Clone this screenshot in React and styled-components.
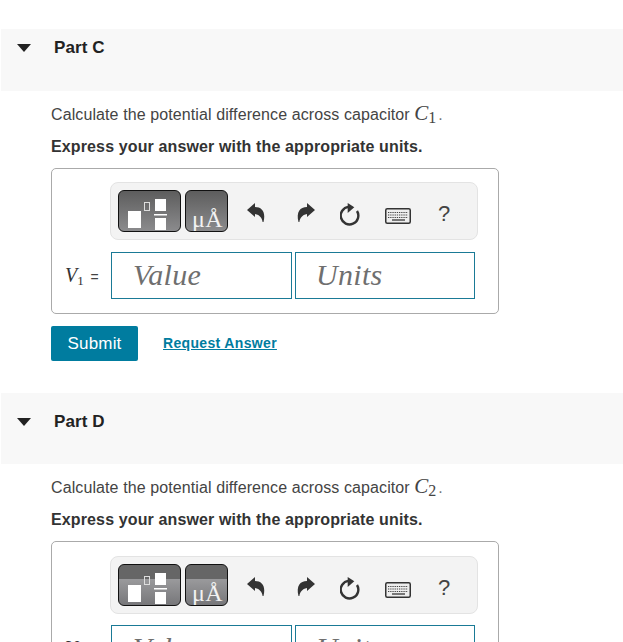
import React from "react";
import styled, { createGlobalStyle } from "styled-components";

const Global = createGlobalStyle`
  html, body { margin: 0; padding: 0; background: #fff; overflow: hidden; height: 642px; }
  body { font-family: "Liberation Sans", Arial, sans-serif; color: #333; }
`;
const Page = styled.div`width: 623px; height: 642px; overflow: hidden; padding-top: 29px; box-sizing: border-box;`;
const Section = styled.section`margin-bottom: ${p => p.$gap || 0}px;`;
const Header = styled.header`
  margin-left: 1px; height: ${p => p.$h}px; background: #f8f8f8; display: flex; align-items: flex-start;
  padding: ${p => p.$pt}px 0 0 16px; box-sizing: border-box;
`;
const Caret = styled.svg`width: 14px; height: 8px; margin-top: 6px; flex: none;`;
const PartTitle = styled.h3`margin: 0 0 0 23px; font-size: 17px; line-height: 19px; font-weight: 700; color: #222; letter-spacing: 0.1px;`;
const Body = styled.div`padding: 10px 0 0 51px;`;
const Prompt = styled.p`margin: 0; height: 24px; font-size: 16px; line-height: 24px; color: #444; letter-spacing: 0.1px; white-space: nowrap;`;
const MathVar = styled.span`
  font-family: "Liberation Serif", serif; font-style: italic; font-size: 21px; color: #444; letter-spacing: 0;
  sub { font-style: normal; font-size: 16px; line-height: 0; vertical-align: -3px; }
`;
const Period = styled.span`margin-left: 2px; color: #777;`;
const Instruction = styled.p`margin: 10px 0 0; font-size: 16px; line-height: 24px; font-weight: 700; color: #333; letter-spacing: 0.13px;`;
const AnswerBox = styled.div`
  margin-top: 9px; width: 448px; height: 146px; box-sizing: border-box; border: 1px solid #aaa; border-radius: 5px;
  padding: ${p => p.$top}px 20px 0 58px;
`;
const Toolbar = styled.div`
  width: 368px; height: 58px; box-sizing: border-box; background: #f3f3f3; border: 1px solid #e3e3e3; border-radius: 8px;
  display: flex; align-items: center; padding: 0 0 0 7px; position: relative;
`;
const TemplateBtn = styled.div`
  width: ${p => p.$w}px; height: 42px; margin-right: 4px; box-sizing: border-box; border: 1px solid #111; border-radius: 6px;
  background: ${p => p.$hard
    ? "linear-gradient(#666 0, #666 14px, #9a9a9c 14px, #77777a 100%)"
    : "linear-gradient(#5d5d5d, #8b8b8d)"};
  display: flex; align-items: flex-end; justify-content: center; overflow: hidden;
`;
const Glyph = styled.svg`display: block; flex: none; margin-right: 4px;`;
const UnitGlyph = styled.span`
  font-family: "Liberation Serif", serif; font-size: 24px; line-height: 24px; color: #f2f2f2; white-space: nowrap; letter-spacing: 0.5px; margin-left: 2px;
`;
const ToolIcon = styled.svg`position: absolute; left: ${p => p.$x}px; top: ${p => p.$y}px; display: block;`;
const Help = styled.span`
  position: absolute; left: 327px; top: 19px; font-size: 22px; line-height: 24px; color: #444;
`;
const InputRow = styled.div`display: flex; align-items: center; margin: ${p => p.$gap}px 0 0 -58px;`;
const VarLabel = styled.div`
  width: 59px; padding-left: 13px; box-sizing: border-box; font-size: 14px; color: #444; white-space: nowrap;
  font-family: "Liberation Sans", sans-serif;
`;
const Var2 = styled.span`
  font-family: "Liberation Serif", serif; font-style: italic; font-size: 20px; color: #333; margin-right: 3px;
  sub { font-style: normal; font-size: 13px; line-height: 0; vertical-align: -3px; }
`;
const Field = styled.div`
  width: ${p => p.$w}px; height: 47px; margin-right: 3px; box-sizing: border-box; border: 1px solid #1a7a96; background: #fff;
  font-family: "Liberation Serif", serif; font-style: italic; font-size: 30px; line-height: 43px; color: #6f6f6f;
  padding-left: ${p => p.$pad}px; letter-spacing: 0.3px;
`;
const Actions = styled.div`display: flex; align-items: center; margin-top: 12px;`;
const Submit = styled.button`
  width: 87px; height: 35px; background: #007c9f; color: #fff; border: 0; border-radius: 2px; padding: 0;
  font: 400 17px "Liberation Sans", sans-serif; letter-spacing: 0.2px;
`;
const Link = styled.a`
  margin: 0 0 2px 25px; font-size: 14px; font-weight: 700; color: #007c9f; text-decoration: underline; letter-spacing: 0.34px;
`;

const Fraction = () => (
  <Glyph width="39" height="32" viewBox="0 0 39 32">
    <rect x="0" y="12" width="13" height="17" fill="#fff" />
    <rect x="16.5" y="3.5" width="5" height="8" fill="none" stroke="#ddd" />
    <rect x="27" y="0" width="11" height="12" fill="#fff" />
    <rect x="26" y="15" width="13" height="1.5" fill="#fff" />
    <rect x="27" y="19" width="11" height="12" fill="#fff" />
  </Glyph>
);

const Tools = () => (
  <>
    <ToolIcon $x={136} $y={20} width="19" height="20" viewBox="0 0 19 20">
      <path d="M0 7 L8 0 L8 4 C15 4 19 9 16.5 19 L15.6 19 C15 15 13 12 8 11 L8 14 Z" fill="#333" />
    </ToolIcon>
    <ToolIcon $x={185} $y={20} width="19" height="20" viewBox="0 0 19 20">
      <path d="M19 7 L11 0 L11 4 C4 4 0 9 2.5 19 L3.4 19 C4 15 6 12 11 11 L11 14 Z" fill="#333" />
    </ToolIcon>
    <ToolIcon $x={229} $y={20} width="22" height="23" viewBox="0 0 22 23">
      <path d="M8.5 3.9 A8.8 8.8 0 1 0 17 8" fill="none" stroke="#333" strokeWidth="2.4" />
      <path d="M7.7 0 L14.3 4.3 L7.7 10 Z" fill="#333" />
    </ToolIcon>
    <ToolIcon $x={274} $y={25} width="26" height="16" viewBox="0 0 26 16">
      <rect x="0.75" y="0.75" width="24.5" height="14.5" rx="1.5" fill="#eee" stroke="#333" strokeWidth="1.5" />
      <path d="M3 4.5h20M3 7h20M3 9.5h20" stroke="#444" strokeWidth="1.2" strokeDasharray="1.3 0.9" />
      <path d="M7 12h13" stroke="#444" strokeWidth="1.4" />
    </ToolIcon>
    <Help>?</Help>
  </>
);

const Part = ({ title, h, pt, sub, gap, boxTop, rowGap }) => (
  <Section $gap={gap}>
    <Header $h={h} $pt={pt}>
      <Caret viewBox="0 0 14 8"><path d="M0 0 H14 L7 8 Z" fill="#222" /></Caret>
      <PartTitle>{title}</PartTitle>
    </Header>
    <Body>
      <Prompt>
        Calculate the potential difference across capacitor <MathVar>C<sub>{sub}</sub></MathVar><Period>.</Period>
      </Prompt>
      <Instruction>Express your answer with the appropriate units.</Instruction>
      <AnswerBox $top={boxTop}>
        <Toolbar>
          <TemplateBtn $w={63} $hard={sub === 2}><Fraction /></TemplateBtn>
          <TemplateBtn $w={43} $hard={sub === 2}><UnitGlyph>μÅ</UnitGlyph></TemplateBtn>
          <Tools />
        </Toolbar>
        <InputRow $gap={rowGap}>
          <VarLabel><Var2>V<sub>{sub}</sub></Var2> =</VarLabel>
          <Field $w={181} $pad={21}>Value</Field>
          <Field $w={180} $pad={20}>Units</Field>
        </InputRow>
      </AnswerBox>
      <Actions>
        <Submit>Submit</Submit>
        <Link>Request Answer</Link>
      </Actions>
    </Body>
  </Section>
);

export default function App() {
  return (
    <Page>
      <Global />
      <Part title="Part C" h={62} pt={9} sub={1} gap={32} boxTop={13} rowGap={12} />
      <Part title="Part D" h={71} pt={19} sub={2} boxTop={14} rowGap={11} />
    </Page>
  );
}
